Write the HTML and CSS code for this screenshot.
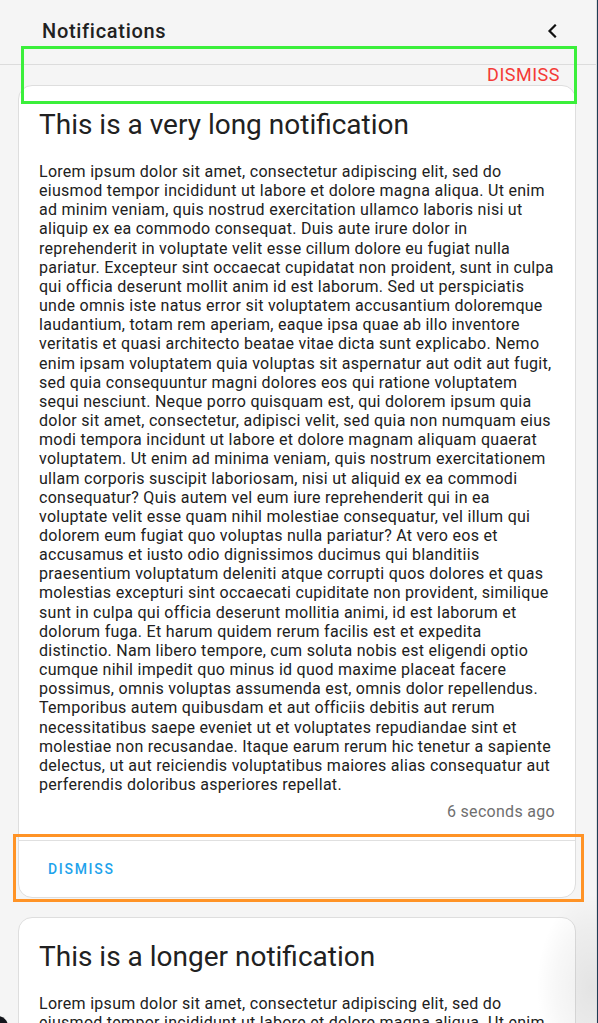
FILE: index.html
```html
<!DOCTYPE html>
<html lang="en">
<head>
<meta charset="utf-8">
<title>Notifications</title>
<link rel="stylesheet" href="styles.css">
</head>
<body>
<div class="screen">
  <header class="topbar">
    <h1 class="topbar-title">Notifications</h1>
    <button class="back-btn" aria-label="Close">
      <svg width="12" height="14" viewBox="0 0 12 14"><path d="M9 1.5 L3.5 7 L9 12.5" fill="none" stroke="#111" stroke-width="2.2" stroke-linecap="square"/></svg>
    </button>
  </header>

  <div class="dismiss-all-row">
    <button class="dismiss-all">Dismiss</button>
  </div>

  <main class="feed">
    <article class="card">
      <div class="card-body">
        <h2 class="card-title">This is a very long notification</h2>
        <p class="card-text">Lorem ipsum dolor sit amet, consectetur adipiscing elit, sed do eiusmod tempor incididunt ut labore et dolore magna aliqua. Ut enim ad minim veniam, quis nostrud exercitation ullamco laboris nisi ut aliquip ex ea commodo consequat. Duis aute irure dolor in reprehenderit in voluptate velit esse cillum dolore eu fugiat nulla pariatur. Excepteur sint occaecat cupidatat non proident, sunt in culpa qui officia deserunt mollit anim id est laborum. Sed ut perspiciatis unde omnis iste natus error sit voluptatem accusantium doloremque laudantium, totam rem aperiam, eaque ipsa quae ab illo inventore veritatis et quasi architecto beatae vitae dicta sunt explicabo. Nemo enim ipsam voluptatem quia voluptas sit aspernatur aut odit aut fugit, sed quia consequuntur magni dolores eos qui ratione voluptatem sequi nesciunt. Neque porro quisquam est, qui dolorem ipsum quia dolor sit amet, consectetur, adipisci velit, sed quia non numquam eius modi tempora incidunt ut labore et dolore magnam aliquam quaerat voluptatem. Ut enim ad minima veniam, quis nostrum exercitationem ullam corporis suscipit laboriosam, nisi ut aliquid ex ea commodi consequatur? Quis autem vel eum iure reprehenderit qui in ea voluptate velit esse quam nihil molestiae consequatur, vel illum qui dolorem eum fugiat quo voluptas nulla pariatur? At vero eos et accusamus et iusto odio dignissimos ducimus qui blanditiis praesentium voluptatum deleniti atque corrupti quos dolores et quas molestias excepturi sint occaecati cupiditate non provident, similique sunt in culpa qui officia deserunt mollitia animi, id est laborum et dolorum fuga. Et harum quidem rerum facilis est et expedita distinctio. Nam libero tempore, cum soluta nobis est eligendi optio cumque nihil impedit quo minus id quod maxime placeat facere possimus, omnis voluptas assumenda est, omnis dolor repellendus. Temporibus autem quibusdam et aut officiis debitis aut rerum necessitatibus saepe eveniet ut et voluptates repudiandae sint et molestiae non recusandae. Itaque earum rerum hic tenetur a sapiente delectus, ut aut reiciendis voluptatibus maiores alias consequatur aut perferendis doloribus asperiores repellat.</p>
        <div class="card-time">6 seconds ago</div>
      </div>
      <div class="card-actions">
        <button class="action-btn">Dismiss</button>
      </div>
    </article>

    <article class="card">
      <div class="card-body">
        <h2 class="card-title">This is a longer notification</h2>
        <p class="card-text">Lorem ipsum dolor sit amet, consectetur adipiscing elit, sed do eiusmod tempor incididunt ut labore et dolore magna aliqua. Ut enim ad minim veniam, quis nostrud exercitation ullamco laboris nisi ut aliquip ex ea commodo consequat. Duis aute irure dolor in reprehenderit in voluptate velit esse cillum dolore eu fugiat nulla pariatur.</p>
        <div class="card-time">12 seconds ago</div>
      </div>
      <div class="card-actions">
        <button class="action-btn">Dismiss</button>
      </div>
    </article>
  </main>

  <div class="mark mark-green"></div>
  <div class="mark mark-orange"></div>
  <div class="corner-shade"></div>
  <div class="corner-dock"></div>
</div>
</body>
</html>
```

FILE: styles.css
```css
html, body {
  margin: 0;
  padding: 0;
  background: #f5f5f5;
  height: 100%;
  overflow: hidden;
}

body {
  font-family: Roboto, "Noto Sans", "Liberation Sans", sans-serif;
  color: #212121;
}

.screen {
  position: relative;
  width: 596px;
  height: 1023px;
  overflow: hidden;
  background: #f5f5f5;
  border-right: 1px solid #dedede;
  box-shadow: 1px 0 0 #1f3d56;
}

/* top bar */
.topbar {
  height: 65px;
  box-sizing: border-box;
  border-bottom: 1px solid #dcdcdc;
  display: flex;
  align-items: flex-start;
  justify-content: space-between;
  padding: 18px 38px 0 42px;
}

.topbar-title {
  margin: 0;
  font-size: 20px;
  font-weight: 500;
  line-height: 26px;
  letter-spacing: 0.7px;
  color: #212121;
}

.back-btn {
  border: 0;
  background: none;
  padding: 0;
  margin-top: 6px;
  width: 12px;
  height: 14px;
  display: flex;
}

/* dismiss-all row */
.dismiss-all-row {
  display: flex;
  justify-content: flex-end;
  padding: 0 36px 0 0;
  height: 20px;
}

.dismiss-all {
  border: 0;
  background: none;
  padding: 0;
  font-family: inherit;
  font-size: 18px;
  line-height: 20px;
  letter-spacing: 0.5px;
  text-transform: uppercase;
  color: #f43a36;
}

/* notification cards */
.feed {
  display: flex;
  flex-direction: column;
  gap: 19px;
  padding: 0 20px 0 18px;
}

.card {
  background: #fff;
  border: 1px solid #dedede;
  border-radius: 14px;
}

.card-body {
  padding: 20px 20px 19px;
}

.card-title {
  margin: 0;
  font-size: 28px;
  font-weight: 400;
  line-height: 37px;
  color: #212121;
}

.card-text {
  margin: 19px 0 0;
  font-size: 16px;
  line-height: 19.15px;
  letter-spacing: 0.28px;
  color: #212121;
}

.card-time {
  margin-top: 8px;
  text-align: right;
  font-size: 16px;
  line-height: 19px;
  letter-spacing: 0.3px;
  color: #6f6f6f;
}

.card-actions {
  border-top: 1px solid #e0e0e0;
  height: 56px;
  display: flex;
  align-items: center;
  padding: 0 0 0 29px;
}

.action-btn {
  border: 0;
  background: none;
  padding: 0;
  font-family: inherit;
  font-size: 14px;
  font-weight: 500;
  letter-spacing: 1.7px;
  text-transform: uppercase;
  color: #1ea3ec;
}

/* highlight outlines drawn over the list */
.mark {
  position: absolute;
  box-sizing: border-box;
  pointer-events: none;
}

.mark-green {
  left: 21px;
  top: 46px;
  width: 556px;
  height: 58px;
  border: 3px solid #3bef3b;
}

.mark-orange {
  left: 13px;
  top: 834px;
  width: 571px;
  height: 68px;
  border: 3px solid #ff9326;
}

/* soft shade cast into the lower right corner */
.corner-shade {
  position: absolute;
  right: -50px;
  bottom: -60px;
  width: 110px;
  height: 190px;
  pointer-events: none;
  background: radial-gradient(ellipse at center, rgba(0, 0, 0, 0.07) 0%, rgba(0, 0, 0, 0.03) 45%, rgba(0, 0, 0, 0) 70%);
}

/* edge of the dark dock peeking in at the lower left */
.corner-dock {
  position: absolute;
  left: -13px;
  top: 1016px;
  width: 21px;
  height: 21px;
  border-radius: 50%;
  background: #14161c;
}
```
